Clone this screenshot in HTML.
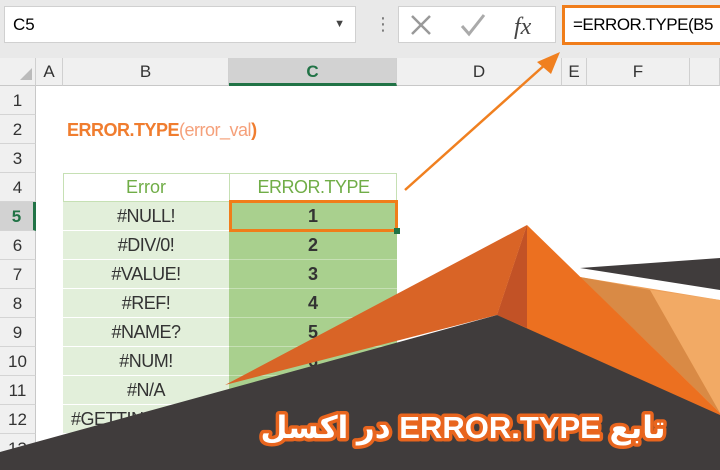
<!DOCTYPE html>
<html><head><meta charset="utf-8"><style>
body{margin:0;width:720px;height:470px;overflow:hidden;position:relative;background:#fff;font-family:"Liberation Sans","DejaVu Sans",sans-serif}
.a{position:absolute;box-sizing:border-box}
.rh{position:absolute;left:0;width:36px;height:29px;background:#f0f0f0;border-bottom:1px solid #d4d4d4;border-right:1px solid #c8c8c8;text-align:center;line-height:29px;font-size:17px;color:#333;box-sizing:border-box}
.ch{position:absolute;top:58px;height:28px;background:#f0f0f0;border-right:1px solid #d0d0d0;border-bottom:1px solid #c8c8c8;text-align:center;line-height:28px;font-size:17px;color:#333;box-sizing:border-box}
.cb{position:absolute;left:63px;width:166px;height:29px;background:#e2efda;border-bottom:1px solid #fff;text-align:center;line-height:29px;font-size:18px;color:#333;box-sizing:border-box;letter-spacing:-0.5px}
.cc{position:absolute;left:229px;width:168px;height:29px;background:#a9d08e;border-bottom:1px solid #c6e0b4;text-align:center;line-height:29px;font-size:18px;font-weight:bold;color:#333;box-sizing:border-box}
</style></head><body>
<div class="a" style="left:0;top:0;width:720px;height:58px;background:#e9e9e9"></div>
<div class="a" style="left:4px;top:6px;width:352px;height:37px;background:#fff;border:1px solid #d0d0d0;font-size:17px;line-height:35px;padding-left:8px">C5<span style="position:absolute;right:10px;font-size:11px;color:#444">▼</span></div>
<div class="a" style="left:374px;top:14px;font-size:18px;color:#777;line-height:20px">⋮</div>
<div class="a" style="left:398px;top:6px;width:158px;height:37px;background:#fff;border:1px solid #d0d0d0"></div>
<svg class="a" style="left:398px;top:6px" width="158" height="37"><path d="M14 10 L32 28 M32 10 L14 28" stroke="#999" stroke-width="2.5"/><path d="M64 20 L71 28 L86 9" stroke="#aaa" stroke-width="3" fill="none"/><text x="116" y="28" font-family="Liberation Serif" font-style="italic" font-size="24" fill="#444">fx</text></svg>
<div class="a" style="left:562px;top:5px;width:170px;height:40px;background:#fff;border:3px solid #f07d1a;font-size:17px;line-height:34px;padding-left:8px;white-space:nowrap;letter-spacing:-0.5px">=ERROR.TYPE(B5</div>
<div class="ch" style="left:0;width:36px"></div>
<svg class="a" style="left:18px;top:66px" width="16" height="16"><path d="M14 2 L14 14 L2 14 Z" fill="#bbb"/></svg>
<div class="ch" style="left:36px;width:27px">A</div>
<div class="ch" style="left:63px;width:166px">B</div>
<div class="ch" style="left:229px;width:168px;background:#d2d2d2;color:#217346;font-weight:bold;border-bottom:3px solid #217346">C</div>
<div class="ch" style="left:397px;width:165px">D</div>
<div class="ch" style="left:562px;width:25px">E</div>
<div class="ch" style="left:587px;width:103px">F</div>
<div class="ch" style="left:690px;width:30px"></div>
<div class="rh" style="top:86px">1</div><div class="rh" style="top:115px">2</div><div class="rh" style="top:144px">3</div><div class="rh" style="top:173px">4</div>
<div class="rh" style="top:202px;background:#d2d2d2;color:#217346;font-weight:bold;border-right:3px solid #217346">5</div>
<div class="rh" style="top:231px">6</div><div class="rh" style="top:260px">7</div><div class="rh" style="top:289px">8</div><div class="rh" style="top:318px">9</div><div class="rh" style="top:347px">10</div><div class="rh" style="top:376px">11</div><div class="rh" style="top:405px">12</div><div class="rh" style="top:434px">13</div>
<div class="a" style="left:67px;top:118px;font-size:18px;font-weight:bold;color:#f07d2f;line-height:24px;letter-spacing:-0.5px">ERROR.TYPE<span style="font-weight:normal;color:#f5a07a">(error_val</span>)</div>
<div class="a" style="left:63px;top:173px;width:334px;height:29px;border:1px solid #c6e0b4"></div>
<div class="a" style="left:63px;top:173px;width:166px;line-height:29px;text-align:center;font-size:18px;color:#70ad47">Error</div>
<div class="a" style="left:229px;top:173px;width:168px;line-height:29px;text-align:center;font-size:18px;color:#70ad47;border-left:1px solid #c6e0b4;letter-spacing:-0.5px">ERROR.TYPE</div>
<div class="cb" style="top:202px">#NULL!</div><div class="cb" style="top:231px">#DIV/0!</div><div class="cb" style="top:260px">#VALUE!</div><div class="cb" style="top:289px">#REF!</div><div class="cb" style="top:318px">#NAME?</div><div class="cb" style="top:347px">#NUM!</div><div class="cb" style="top:376px">#N/A</div><div class="cb" style="top:405px;text-align:left;padding-left:8px">#GETTING_DATA</div>
<div class="cc" style="top:202px">1</div><div class="cc" style="top:231px">2</div><div class="cc" style="top:260px">3</div><div class="cc" style="top:289px">4</div><div class="cc" style="top:318px">5</div><div class="cc" style="top:347px">6</div><div class="cc" style="top:376px">7</div><div class="cc" style="top:405px">8</div>
<div class="a" style="left:229px;top:200px;width:169px;height:32px;border:3px solid #f07d1a"></div>
<div class="a" style="left:394px;top:228px;width:6px;height:6px;background:#217346"></div>
<svg class="a" style="left:0;top:0" width="720" height="470">
<path d="M405 190 L548 62" stroke="#f08020" stroke-width="2.5"/>
<path d="M560 52 L537 62 L551 74 Z" fill="#f08020"/>
<path d="M580 268 L720 258 L720 290 Z" fill="#403c3c"/>
<path d="M580 277 L720 300 L720 413 Z" fill="#eea05a"/>
<path d="M650 290 L720 300 L720 413 Z" fill="#f2aa65"/>
<path d="M580 277 L650 290 L720 413 Z" fill="#d98a45"/>
<path d="M527 225 L225 385 L497 315 Z" fill="#d96426"/>
<path d="M527 225 L720 413 L720 430 L497 315 Z" fill="#ec7020"/>
<path d="M527 225 L497 315 L527 328 Z" fill="#c25226"/>
<path d="M0 452 L497 315 L720 415 L720 470 L0 470 Z" fill="#403c3c"/>
<text x="463" y="438" text-anchor="middle" font-family="Liberation Sans,DejaVu Sans,sans-serif" font-weight="bold" font-size="31" fill="#fff" stroke="#e8651e" stroke-width="7" paint-order="stroke" stroke-linejoin="round" direction="rtl">تابع ERROR.TYPE در اکسل</text>
</svg>
</body></html>
